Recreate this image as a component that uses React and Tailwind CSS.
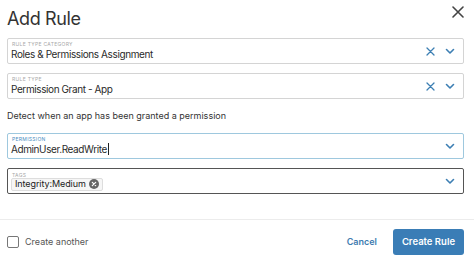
import React from 'react';

const Chevron = () => (
  <svg width="10" height="7" viewBox="0 0 10 7" fill="none" stroke="#3d7fb3" strokeWidth="1.6" strokeLinecap="round" strokeLinejoin="round">
    <path d="M1.5 1.5 L5 5 L8.5 1.5" />
  </svg>
);

const Clear = () => (
  <svg width="9" height="9" viewBox="0 0 9 9" fill="none" stroke="#3d7fb3" strokeWidth="1.3" strokeLinecap="round">
    <path d="M1 1 L8 8 M8 1 L1 8" />
  </svg>
);

const Field = ({ label, value, clearable, border = 'border-[#d4d4d4]', labelColor = 'text-[#a8a8a8]', children }) => (
  <div className={`h-[26px] border ${border} rounded-[2px] flex items-center pl-[3px] pr-[8px]`}>
    <div className="flex-1 flex flex-col">
      <span className={`text-[5px] leading-[6px] tracking-[0.06em] uppercase ${labelColor} pl-[1px]`}>{label}</span>
      {children || <span className="text-[10px] leading-[14px] tracking-[-0.04em] text-[#2a2a2a]">{value}</span>}
    </div>
    {clearable && <div className="mr-[10px] flex items-center"><Clear /></div>}
    <Chevron />
  </div>
);

export default function App() {
  return (
    <div className="w-[474px] h-[262px] bg-white flex flex-col" style={{ fontFamily: 'Inter, "Noto Sans", sans-serif' }}>
      <div className="pl-[7px] pr-[10px] pt-[5px]">
        <div className="flex justify-between items-start">
          <h1 className="text-[18px] leading-[28px] tracking-[-0.02em] text-[#333]">Add Rule</h1>
          <svg className="mt-[1px]" width="12" height="12" viewBox="0 0 12 12" fill="none" stroke="#444" strokeWidth="1.6" strokeLinecap="round">
            <path d="M1 1 L11 11 M11 1 L1 11" />
          </svg>
        </div>
        <div className="mt-[5px] flex flex-col gap-[9px]">
          <Field label="Rule Type Category" value="Roles & Permissions Assignment" clearable />
          <Field label="Rule Type" value="Permission Grant - App" clearable />
        </div>
        <p className="mt-[10px] text-[9px] leading-[14px] text-[#333]">Detect when an app has been granted a permission</p>
        <div className="mt-[10px] flex flex-col gap-[9px]">
          <Field label="Permission" border="border-[#9ec8de]" labelColor="text-[#4a8cc0]">
            <span className="text-[10px] leading-[14px] tracking-[-0.04em] text-[#2a2a2a] flex items-center">
              AdminUser.ReadWrite<span className="inline-block w-[1px] h-[12px] bg-[#222] ml-[1px]" />
            </span>
          </Field>
          <Field label="Tags" border="border-[#555] border-[1.5px]">
            <div className="flex">
              <span className="flex items-center gap-[3px] border border-[#ddd] bg-[#f6f6f6] rounded-[2px] px-[3px] h-[13px] text-[9px] tracking-[-0.01em] text-[#222]">
                Integrity:Medium
                <svg width="10" height="10" viewBox="0 0 10 10">
                  <circle cx="5" cy="5" r="5" fill="#666" />
                  <path d="M3.3 3.3 L6.7 6.7 M6.7 3.3 L3.3 6.7" stroke="#fff" strokeWidth="1.2" strokeLinecap="round" />
                </svg>
              </span>
            </div>
          </Field>
        </div>
      </div>
      <div className="mt-[25px] border-t border-[#ececec]" />
      <div className="flex items-center justify-between pl-[7px] pr-[10px] pt-[9px]">
        <label className="flex items-center gap-[6px]">
          <span className="w-[12px] h-[12px] border border-[#777] rounded-[2px]" />
          <span className="text-[9px] text-[#555]">Create another</span>
        </label>
        <div className="flex items-center gap-[16px]">
          <span className="text-[9px] font-semibold text-[#3f7cb0]">Cancel</span>
          <button className="h-[26px] px-[9px] rounded-[3px] bg-[#3a7db6] text-white text-[9.5px] font-semibold">Create Rule</button>
        </div>
      </div>
    </div>
  );
}
